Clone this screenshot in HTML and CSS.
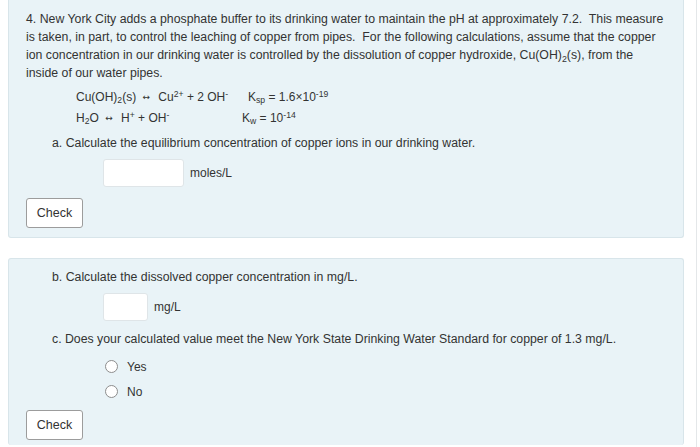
FILE: index.html
```html
<!DOCTYPE html>
<html>
<head>
<meta charset="utf-8">
<link rel="stylesheet" href="styles.css">
</head>
<body>
<div class="page">
  <section class="panel panel-first">
    <p class="intro">4. New York City adds a phosphate buffer to its drinking water to maintain the pH at approximately 7.2.&nbsp; This measure<br>is taken, in part, to control the leaching of copper from pipes.&nbsp; For the following calculations, assume that the copper<br>ion concentration in our drinking water is controlled by the dissolution of copper hydroxide, Cu(OH)<sub>2</sub>(s), from the<br>inside of our water pipes.</p>
    <div class="equations">
      <div class="eq-row">
        <span class="eq-left">Cu(OH)<sub>2</sub>(s) <span class="arrow">↔</span> Cu<sup>2+</sup> + 2 OH<sup>-</sup></span>
        <span class="eq-k eq-ksp">K<sub>sp</sub> = 1.6×10<sup>-19</sup></span>
      </div>
      <div class="eq-row">
        <span class="eq-left">H<sub>2</sub>O <span class="arrow">↔</span> H<sup>+</sup> + OH<sup>-</sup></span>
        <span class="eq-k">K<sub>w</sub> = 10<sup>-14</sup></span>
      </div>
    </div>
    <p class="question">a. Calculate the equilibrium concentration of copper ions in our drinking water.</p>
    <div class="answer-row">
      <input class="answer answer-wide" type="text">
      <span class="unit">moles/L</span>
    </div>
    <button class="check">Check</button>
  </section>

  <section class="panel panel-second">
    <p class="question question-b">b. Calculate the dissolved copper concentration in mg/L.</p>
    <div class="answer-row">
      <input class="answer answer-narrow" type="text">
      <span class="unit">mg/L</span>
    </div>
    <p class="question question-c">c. Does your calculated value meet the New York State Drinking Water Standard for copper of 1.3 mg/L.</p>
    <div class="options">
      <label class="option"><span class="radio"></span>Yes</label>
      <label class="option"><span class="radio"></span>No</label>
    </div>
    <button class="check check-second">Check</button>
  </section>
</div>
</body>
</html>
```

FILE: styles.css
```css
* { box-sizing: border-box; }

html, body {
  margin: 0;
  padding: 0;
  background: #ffffff;
}

body {
  font-family: "Liberation Sans", Arial, sans-serif;
  font-size: 12.3px;
  color: #333333;
  width: 700px;
  height: 447px;
  overflow: hidden;
}

.page {
  width: 697px;
  height: 447px;
  border-right: 1px solid #e4e7e9;
  padding-left: 8px;
}

.panel {
  width: 676px;
  background: #e9f3f7;
  border: 1px solid #d8e5ea;
  border-radius: 3px;
  padding-left: 17px;
  padding-right: 4px;
}

.panel-first {
  border-top: none;
  border-top-left-radius: 0;
  border-top-right-radius: 0;
  padding-top: 10px;
  padding-bottom: 9px;
}

.panel-second {
  margin-top: 20px;
  padding-top: 9px;
  padding-bottom: 5px;
  border-bottom: none;
}

p { margin: 0; }

.intro {
  line-height: 18px;
  white-space: nowrap;
}

sub, sup {
  font-size: 72%;
  line-height: 0;
  position: relative;
}
sub { vertical-align: baseline; top: 0.3em; }
sup { vertical-align: baseline; top: -0.45em; }

.equations {
  margin-top: 4px;
  padding-left: 50px;
  font-size: 12px;
}

.eq-row {
  display: flex;
  height: 21px;
  align-items: center;
}

.eq-left {
  width: 166px;
  white-space: nowrap;
}

.eq-ksp { margin-left: 6px; }

.arrow {
  font-family: "DejaVu Sans", sans-serif;
  font-size: 9px;
  margin: 0 5px 0 3px;
  position: relative;
  top: -1px;
}

.question {
  margin-top: 6px;
  padding-left: 26px;
  line-height: 18px;
}

.question-b { margin-top: 0; }
.question-c { margin-top: 9px; }

.answer-row {
  display: flex;
  align-items: center;
  margin-top: 7px;
  padding-left: 77px;
  gap: 6px;
}

.answer {
  height: 28px;
  background: #ffffff;
  border: 1px solid #dfe5e8;
  border-radius: 3px;
  margin: 0;
  padding: 0;
}

.answer-wide { width: 81px; }
.answer-narrow { width: 45px; }

.unit { font-size: 12px; }

.check {
  display: block;
  margin-top: 11px;
  width: 57px;
  height: 30px;
  background: #ffffff;
  border: 1px solid #9c9c9c;
  border-radius: 3px;
  font-family: "Liberation Sans", Arial, sans-serif;
  font-size: 12.5px;
  color: #333333;
  padding: 0;
}

.check-second { margin-top: 6px; }

.options {
  margin-top: 6px;
  padding-left: 79px;
  display: flex;
  flex-direction: column;
}

.option {
  display: flex;
  align-items: center;
  height: 25px;
  font-size: 12px;
}

.radio {
  width: 13px;
  height: 13px;
  border: 1px solid #8d8d8d;
  border-radius: 50%;
  background: #ffffff;
  margin-right: 9px;
}
```
